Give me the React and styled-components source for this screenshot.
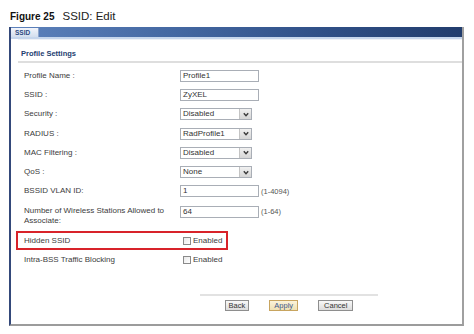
import styled, { createGlobalStyle } from "styled-components"

const GlobalStyle = createGlobalStyle`
  body {
    margin: 0;
    background: #ffffff;
    font-family: "Liberation Sans", Arial, sans-serif;
  }
`

const Page = styled.div`
  width: 474px;
  height: 334px;
  padding-top: 10px;
  box-sizing: border-box;
  overflow: hidden;
`

const Caption = styled.div`
  display: flex;
  align-items: baseline;
  margin-left: 10px;
  height: 12px;
  line-height: 12px;
  margin-bottom: 5px;
  color: #111;
`
const CaptionNum = styled.span`
  font-weight: bold;
  font-size: 10px;
  margin-right: 8px;
`
const CaptionTitle = styled.span`
  font-size: 11.5px;
  color: #222;
`

const Frame = styled.div`
  margin-left: 9px;
  width: 455px;
  border-left: 2px solid #34497a;
  border-right: 2px solid #a0a0a0;
  border-bottom: 2px solid #9c9c9c;
  box-sizing: border-box;
  display: flex;
  flex-direction: column;
`

const HeaderBar = styled.div`
  height: 10px;
  background: linear-gradient(to right, #5d82bc 0%, #4569a3 35%, #2f4f86 70%, #223d6d 100%);
  border-bottom: 2px solid #c6d6ec;
  display: flex;
`
const Tab = styled.div`
  width: 28px;
  margin-top: 1px;
  background: linear-gradient(to bottom, #f2f5fb, #d3deee);
  border-right: 1px solid #8ea6cc;
  color: #2b4a80;
  font-size: 6.5px;
  font-weight: bold;
  line-height: 9px;
  padding-left: 4px;
  box-sizing: border-box;
`

const SectionHead = styled.div`
  margin-left: 7px;
  padding: 9px 0 2px 3px;
  line-height: 10px;
  font-size: 7.5px;
  font-weight: bold;
  color: #23406f;
  border-bottom: 2px solid #dedede;
  border-top: 1px solid #eef1f6;
`

const Rows = styled.div`
  margin-top: 3px;
  margin-left: 5px;
  display: flex;
  flex-direction: column;
`

const Row = styled.div`
  width: 212px;
  height: ${p => (p.$tall ? "29.9px" : "19.3px")};
  display: flex;
  align-items: ${p => (p.$tall ? "flex-start" : "center")};
  padding-top: ${p => (p.$tall ? "3px" : "0")};
  padding-left: 6px;
  border: 2px solid ${p => (p.$highlight ? "#d8232a" : "transparent")};
  border-width: 0 2px;
  box-sizing: border-box;
  font-size: 8px;
  color: #3c3c3c;
  white-space: nowrap;
  ${p => p.$highlight && "border-width: 2px; padding-top: 0;"}
`

const Label = styled.div`
  width: 156px;
  flex-shrink: 0;
  line-height: 10px;
  padding-top: ${p => (p.$tall ? "2px" : "0")};
`

const TextBox = styled.div`
  width: 79px;
  height: 12px;
  border: 1px solid #a9aeb6;
  box-sizing: border-box;
  padding-left: 2px;
  line-height: 10px;
  font-size: 8px;
  color: #333;
  flex-shrink: 0;
  background: #fff;
`

const Select = styled.div`
  width: 72px;
  height: 12px;
  border: 1px solid #a9aeb6;
  box-sizing: border-box;
  display: flex;
  flex-shrink: 0;
  background: #fff;
`
const SelectValue = styled.div`
  flex: 1;
  padding-left: 2px;
  line-height: 10px;
  font-size: 8px;
  color: #333;
`
const SelectButton = styled.div`
  width: 11px;
  background: linear-gradient(to bottom, #f1f1f1, #d6d6d6);
  border-left: 1px solid #c4c4c4;
  display: flex;
  align-items: center;
  justify-content: center;
`

const Hint = styled.span`
  margin-left: 2px;
  font-size: 7.5px;
  color: #555;
`

const CheckWrap = styled.div`
  display: flex;
  align-items: center;
  margin-left: 3px;
  font-size: 8px;
  color: #3c3c3c;
`
const CheckBox = styled.span`
  width: 8px;
  height: 8px;
  border: 1px solid #8a8a8a;
  box-sizing: border-box;
  background: linear-gradient(to bottom right, #e8e8e8, #ffffff);
  margin-right: 2px;
`

const Footer = styled.div`
  margin-top: 24px;
  margin-left: 189px;
  width: 178px;
  border-top: 2px solid #e2e2e2;
  padding-top: 4px;
  padding-bottom: 13px;
  display: flex;
  justify-content: center;
  gap: 20px;
`

const Button = styled.div`
  height: 11px;
  padding: 0 ${p => p.$pad || 3}px;
  border: 1px solid ${p => (p.$primary ? "#c8a560" : "#8e8e8e")};
  background: ${p => (p.$primary ? "linear-gradient(to bottom, #fbf3da, #efe1b4)" : "linear-gradient(to bottom, #f8f8f8, #dcdcdc)")};
  box-sizing: border-box;
  font-size: 7.5px;
  line-height: 9px;
  color: ${p => (p.$primary ? "#3f5a8c" : "#333")};
`

function Chevron() {
  return (
    <svg width="6" height="5" viewBox="0 0 6 5">
      <path d="M0.8 1.2 L3 3.6 L5.2 1.2" fill="none" stroke="#3a3a3a" strokeWidth="1.4" />
    </svg>
  )
}

function Dropdown({ value }) {
  return (
    <Select>
      <SelectValue>{value}</SelectValue>
      <SelectButton><Chevron /></SelectButton>
    </Select>
  )
}

function Check() {
  return (
    <CheckWrap>
      <CheckBox />
      Enabled
    </CheckWrap>
  )
}

export default function App() {
  return (
    <Page>
      <GlobalStyle />
      <Caption>
        <CaptionNum>Figure 25</CaptionNum>
        <CaptionTitle>SSID: Edit</CaptionTitle>
      </Caption>
      <Frame>
        <HeaderBar>
          <Tab>SSID</Tab>
        </HeaderBar>
        <SectionHead>Profile Settings</SectionHead>
        <Rows>
          <Row>
            <Label>Profile Name :</Label>
            <TextBox>Profile1</TextBox>
          </Row>
          <Row>
            <Label>SSID :</Label>
            <TextBox>ZyXEL</TextBox>
          </Row>
          <Row>
            <Label>Security :</Label>
            <Dropdown value="Disabled" />
          </Row>
          <Row>
            <Label>RADIUS :</Label>
            <Dropdown value="RadProfile1" />
          </Row>
          <Row>
            <Label>MAC Filtering :</Label>
            <Dropdown value="Disabled" />
          </Row>
          <Row>
            <Label>QoS :</Label>
            <Dropdown value="None" />
          </Row>
          <Row>
            <Label>BSSID VLAN ID:</Label>
            <TextBox>1</TextBox>
            <Hint>(1-4094)</Hint>
          </Row>
          <Row $tall>
            <Label $tall>Number of Wireless Stations Allowed to<br />Associate:</Label>
            <TextBox style={{ marginTop: 1.5 }}>64</TextBox>
            <Hint style={{ lineHeight: "15px" }}>(1-64)</Hint>
          </Row>
          <Row $highlight>
            <Label>Hidden SSID</Label>
            <Check />
          </Row>
          <Row>
            <Label>Intra-BSS Traffic Blocking</Label>
            <Check />
          </Row>
        </Rows>
        <Footer>
          <Button>Back</Button>
          <Button $primary $pad={4}>Apply</Button>
          <Button $pad={5}>Cancel</Button>
        </Footer>
      </Frame>
    </Page>
  )
}
